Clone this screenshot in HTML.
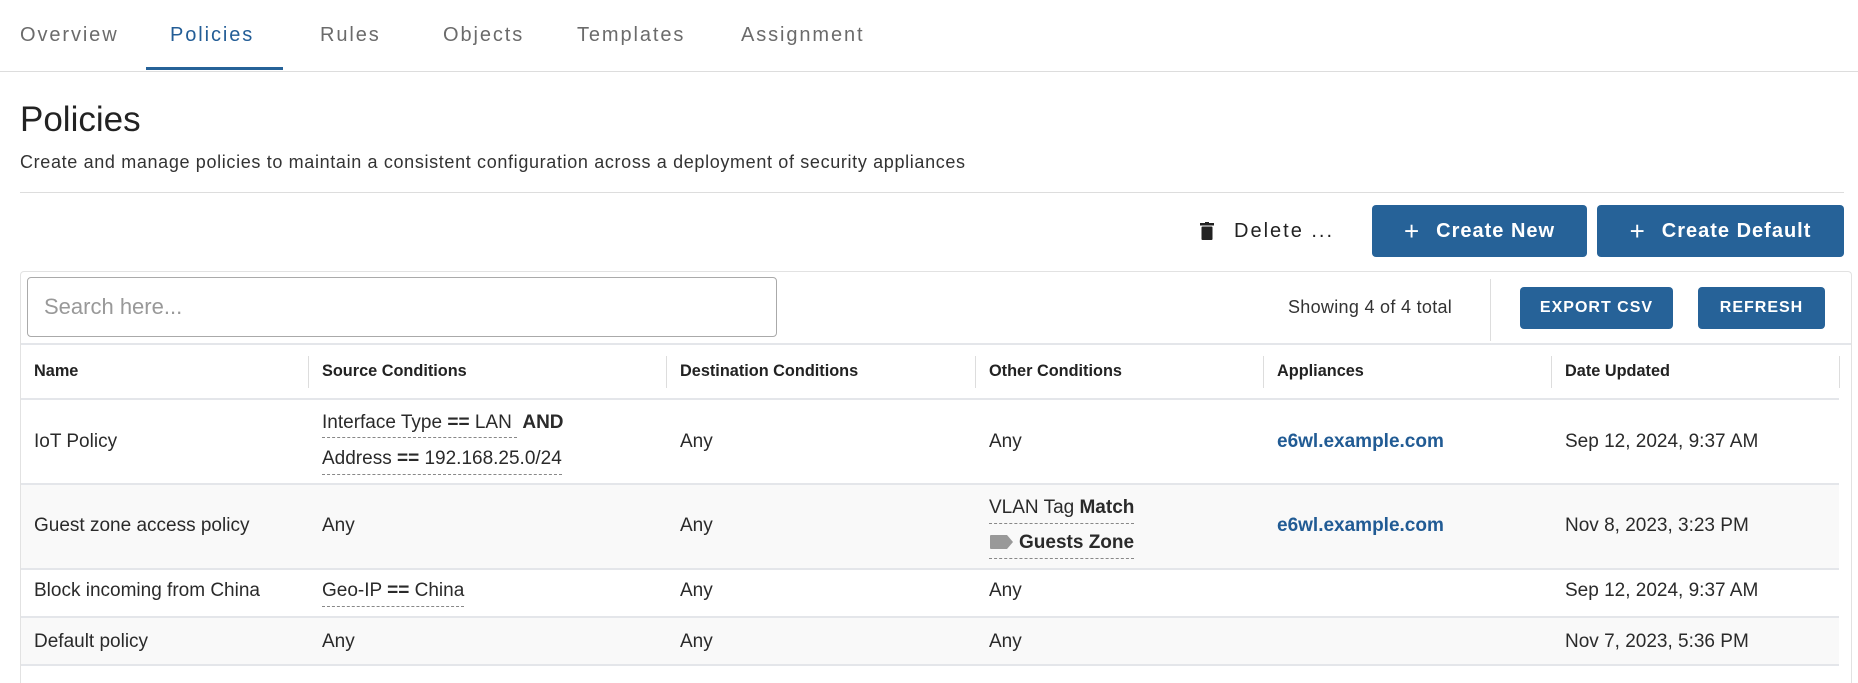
<!DOCTYPE html>
<html><head><meta charset="utf-8"><style>
*{box-sizing:border-box;margin:0;padding:0}
html,body{width:1858px;height:683px;overflow:hidden}
body{background:#fff;font-family:"Liberation Sans",Arial,sans-serif;color:#222;position:relative}
.a{position:absolute;white-space:nowrap}
.tab{top:24px;font-size:20px;letter-spacing:1.9px;color:#6b6b6b}
.btn{background:#266298;color:#fff;border-radius:4px;display:flex;align-items:center;justify-content:center;font-weight:bold;letter-spacing:1px}
.hd{font-weight:bold;font-size:16.3px;top:362px}
.cell{font-size:19px;color:#2a2a2a}
.dl{border-bottom:1px dashed #888;padding-bottom:4px}
.vd{position:absolute;width:1px;background:#ddd;top:356px;height:32px}
.row{position:absolute;left:21px;width:1818px;border-top:2px solid #e4e6ea}
.link{color:#215b94;font-weight:bold}
</style></head><body>
<div class="a tab" style="left:20px">Overview</div>
<div class="a tab" style="left:170px;color:#235d96">Policies</div>
<div class="a tab" style="left:320px">Rules</div>
<div class="a tab" style="left:443px">Objects</div>
<div class="a tab" style="left:577px">Templates</div>
<div class="a tab" style="left:741px">Assignment</div>
<div class="a" style="left:146px;top:67px;width:137px;height:3px;background:#266298"></div>
<div class="a" style="left:0;top:71px;width:1858px;height:1px;background:#ddd"></div>
<div class="a" style="left:20px;top:100px;font-size:35px;color:#222">Policies</div>
<div class="a" style="left:20px;top:152px;font-size:18px;letter-spacing:0.65px;color:#333">Create and manage policies to maintain a consistent configuration across a deployment of security appliances</div>
<div class="a" style="left:20px;top:192px;width:1824px;height:1px;background:#ddd"></div>
<svg class="a" style="left:1200px;top:222px" width="14" height="18" viewBox="0 0 14 18"><rect x="0" y="1" width="14" height="2.5" fill="#222"/><rect x="5" y="0" width="4" height="2" fill="#222"/><rect x="1.5" y="4.5" width="11" height="13.5" rx="1" fill="#222"/></svg>
<div class="a" style="left:1234px;top:220px;font-size:20px;letter-spacing:2px;color:#222">Delete ...</div>
<div class="a btn" style="left:1372px;top:205px;width:215px;height:52px;font-size:20px"><span style="font-weight:normal;font-size:26px;margin-right:16px">+</span>Create New</div>
<div class="a btn" style="left:1597px;top:205px;width:247px;height:52px;font-size:20px"><span style="font-weight:normal;font-size:26px;margin-right:16px">+</span>Create Default</div>
<div class="a" style="left:20px;top:271px;width:1832px;height:412px;border:1px solid #e2e2e2;border-bottom:none;border-radius:4px 4px 0 0"></div>
<div class="a" style="left:27px;top:277px;width:750px;height:60px;border:1px solid #aaa;border-radius:4px;font-size:22px;color:#999;padding:16px 0 0 16px">Search here...</div>
<div class="a" style="left:1288px;top:297px;font-size:18px;letter-spacing:0.3px;color:#333">Showing 4 of 4 total</div>
<div class="a" style="left:1490px;top:279px;width:1px;height:62px;background:#ddd"></div>
<div class="a btn" style="left:1520px;top:287px;width:153px;height:42px;font-size:16px">EXPORT CSV</div>
<div class="a btn" style="left:1698px;top:287px;width:127px;height:42px;font-size:16px">REFRESH</div>
<div class="a" style="left:21px;top:343px;width:1830px;height:2px;background:#e4e6ea"></div>
<div class="a hd" style="left:34px">Name</div>
<div class="a hd" style="left:322px">Source Conditions</div>
<div class="a hd" style="left:680px">Destination Conditions</div>
<div class="a hd" style="left:989px">Other Conditions</div>
<div class="a hd" style="left:1277px">Appliances</div>
<div class="a hd" style="left:1565px">Date Updated</div>
<div class="vd" style="left:308px"></div><div class="vd" style="left:666px"></div><div class="vd" style="left:975px"></div><div class="vd" style="left:1263px"></div><div class="vd" style="left:1551px"></div><div class="vd" style="left:1839px"></div>
<div class="row" style="top:398px;height:85px;background:#fff"></div>
<div class="row" style="top:483px;height:85px;background:#f9f9f9"></div>
<div class="row" style="top:568px;height:48px;background:#fff"></div>
<div class="row" style="top:616px;height:50px;background:#f9f9f9;border-bottom:2px solid #e4e6ea"></div>
<div class="a cell" style="left:34px;top:431px">IoT Policy</div>
<div class="a cell" style="left:322px;top:412px"><span class="dl">Interface Type <b>==</b> LAN&nbsp;</span> <b>AND</b></div>
<div class="a cell dl" style="left:322px;top:448px">Address <b>==</b> 192.168.25.0/24</div>
<div class="a cell" style="left:680px;top:431px">Any</div>
<div class="a cell" style="left:989px;top:431px">Any</div>
<div class="a cell link" style="left:1277px;top:431px">e6wl.example.com</div>
<div class="a cell" style="left:1565px;top:431px">Sep 12, 2024, 9:37 AM</div>
<div class="a cell" style="left:34px;top:515px">Guest zone access policy</div>
<div class="a cell" style="left:322px;top:515px">Any</div>
<div class="a cell" style="left:680px;top:515px">Any</div>
<div class="a cell dl" style="left:989px;top:497px">VLAN Tag <b>Match</b></div>
<div class="a cell dl" style="left:989px;top:532px"><svg width="26" height="16" viewBox="0 0 26 16" style="vertical-align:-2px;margin-right:4px"><path d="M2 1H18L24 8L18 15H2Q1 15 1 14V2Q1 1 2 1Z" fill="#999"/></svg><b>Guests Zone</b></div>
<div class="a cell link" style="left:1277px;top:515px">e6wl.example.com</div>
<div class="a cell" style="left:1565px;top:515px">Nov 8, 2023, 3:23 PM</div>
<div class="a cell" style="left:34px;top:580px">Block incoming from China</div>
<div class="a cell dl" style="left:322px;top:580px">Geo-IP <b>==</b> China</div>
<div class="a cell" style="left:680px;top:580px">Any</div>
<div class="a cell" style="left:989px;top:580px">Any</div>
<div class="a cell" style="left:1565px;top:580px">Sep 12, 2024, 9:37 AM</div>
<div class="a cell" style="left:34px;top:631px">Default policy</div>
<div class="a cell" style="left:322px;top:631px">Any</div>
<div class="a cell" style="left:680px;top:631px">Any</div>
<div class="a cell" style="left:989px;top:631px">Any</div>
<div class="a cell" style="left:1565px;top:631px">Nov 7, 2023, 5:36 PM</div>
</body></html>
